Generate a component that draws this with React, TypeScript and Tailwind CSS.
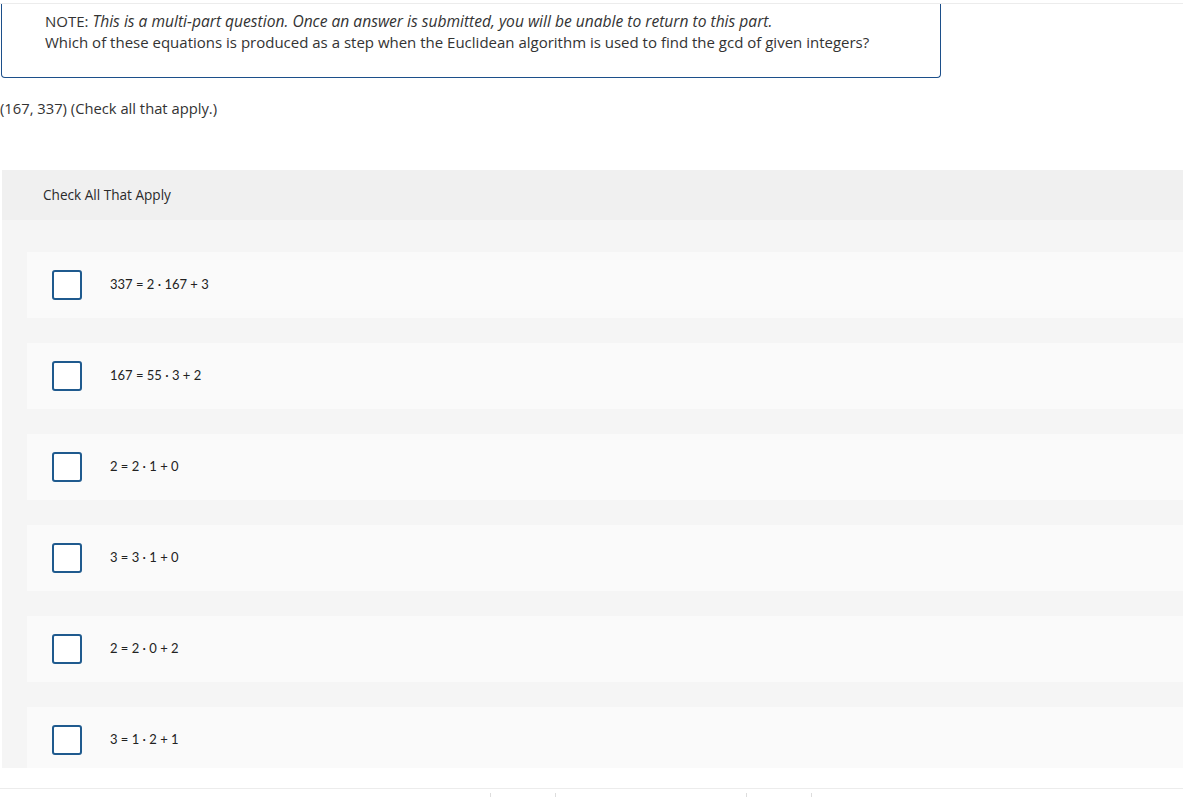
const options = [
  "337 = 2 · 167 + 3",
  "167 = 55 · 3 + 2",
  "2 = 2 · 1 + 0",
  "3 = 3 · 1 + 0",
  "2 = 2 · 0 + 2",
  "3 = 1 · 2 + 1",
];

export default function App() {
  return (
    <div
      className="w-[1183px] h-[798px] overflow-hidden bg-white text-[#333]"
      style={{ fontFamily: "'Open Sans', sans-serif" }}
    >
      <div className="h-[4px] border-b border-[#ececec]" />
      <div className="ml-[1px] w-[940px] h-[74px] border border-t-0 border-[#1c4f8a] rounded-b-[4px] pl-[43px] pt-[7px] text-[15px] leading-[21px]">
        <div>
          NOTE: <i className="text-[15.6px]">This is a multi-part question. Once an answer is submitted, you will be unable to return to this part.</i>
        </div>
        <div>
          Which of these equations is produced as a step when the Euclidean algorithm is used to find the gcd of given integers?
        </div>
      </div>
      <div className="mt-[20px] text-[14.75px] leading-[20px]">(167, 337) (Check all that apply.)</div>

      <div className="mt-[52px] ml-[2px]">
        <div className="h-[50px] bg-[#f0f0f0] flex items-center pl-[41px] text-[13.6px] text-[#2a2a2a]">
          Check All That Apply
        </div>
        <div className="bg-[#f5f5f5] h-[548px] overflow-hidden pl-[25px] pt-[32px] flex flex-col gap-[25px]">
          {options.map((o) => (
            <div key={o} className="h-[66px] shrink-0 bg-[#fafafa] flex items-center pl-[25px]">
              <div className="w-[30px] h-[30px] border-2 border-[#1f5a8e] rounded-[3px] bg-white shrink-0" />
              <span className="ml-[28px] text-[13px] text-[#222]" style={{ fontFamily: "Lato, sans-serif" }}>
                {o}
              </span>
            </div>
          ))}
        </div>
      </div>

      <div className="mt-[20px] border-t border-[#ececec] flex pl-[490px] pt-[4px]">
        <div className="w-px h-[4px] bg-[#ddd]" />
        <div className="w-px h-[4px] bg-[#ddd] ml-[64px]" />
        <div className="w-px h-[4px] bg-[#ddd] ml-[190px]" />
        <div className="w-px h-[4px] bg-[#ddd] ml-[64px]" />
      </div>
    </div>
  );
}
